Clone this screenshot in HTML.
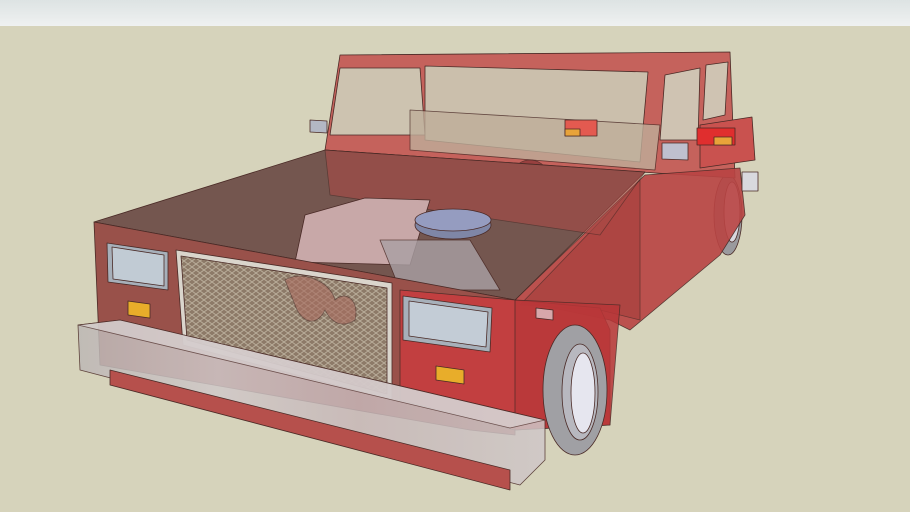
<!DOCTYPE html>
<html><head><meta charset="utf-8"><style>
html,body{margin:0;padding:0;width:910px;height:512px;overflow:hidden;background:#d6d3bb}
svg{display:block}
</style></head><body>
<svg width="910" height="512" viewBox="0 0 910 512" xmlns="http://www.w3.org/2000/svg">
<defs>
<linearGradient id="sky" x1="0" y1="0" x2="0" y2="1"><stop offset="0" stop-color="#dde3e3"/><stop offset="1" stop-color="#eff1f1"/></linearGradient>
<pattern id="mesh" width="8" height="6" patternUnits="userSpaceOnUse">
<rect width="8" height="6" fill="#8d7a68"/>
<path d="M0 3 L4 0 L8 3 L4 6 Z" fill="none" stroke="#b9ad9a" stroke-width="1"/>
</pattern>
<linearGradient id="bump" x1="0" y1="0" x2="1" y2="0"><stop offset="0" stop-color="#bdb7b5"/><stop offset=".3" stop-color="#d0c9c9"/><stop offset=".6" stop-color="#c7b7b8"/><stop offset="1" stop-color="#cfc8c8"/></linearGradient>
</defs>
<rect x="0" y="0" width="910" height="26" fill="url(#sky)"/>
<rect x="0" y="26" width="910" height="486" fill="#d6d3bb"/>
<g stroke="#4a2a26" stroke-width="0.8" stroke-linejoin="round">
<!-- rear wheel -->
<ellipse cx="728" cy="215" rx="14" ry="40" fill="#9a9a9e"/>
<ellipse cx="732" cy="212" rx="8" ry="30" fill="#d8d8e0"/>
<!-- cab -->
<polygon points="340,55 730,52 735,178 640,172 325,150" fill="#c5625c"/>
<polygon points="340,68 420,68 425,135 330,135" fill="#cdc3b0"/>
<polygon points="425,66 648,72 640,162 425,140" fill="#cbbfac"/>
<polygon points="665,75 700,68 698,140 660,140" fill="#cfc3b2"/>
<polygon points="706,65 728,62 725,115 703,120" fill="#cfc3b2"/>
<polygon points="410,110 660,125 655,170 410,150" fill="#bfae9a" opacity=".8"/>
<rect x="565" y="120" width="32" height="16" fill="#e35a50"/>
<rect x="565" y="129" width="15" height="7" fill="#e8a33a"/>
<polygon points="700,125 752,117 755,160 700,168" fill="#c9524f"/>
<rect x="697" y="128" width="38" height="17" fill="#e02e2e"/>
<rect x="714" y="137" width="18" height="8" fill="#e8a33a"/>
<!-- side body -->
<polygon points="515,300 645,175 740,168 745,215 720,255 630,330 610,320" fill="#b94443" opacity=".9"/>
<polygon points="520,305 640,180 640,320 600,310" fill="#a8403e" opacity=".7"/>
<ellipse cx="530" cy="195" rx="25" ry="35" fill="#8e3838" opacity=".8"/>
<!-- hood -->
<polygon points="94,222 325,150 645,172 515,300" fill="#74564f"/>
<polygon points="325,150 645,172 600,235 330,195" fill="#a94a46" opacity=".6"/>
<!-- engine -->
<polygon points="305,215 365,198 430,200 410,265 295,262" fill="#c8a8a8"/>
<ellipse cx="453" cy="225" rx="38" ry="14" fill="#7f86a6"/>
<ellipse cx="453" cy="220" rx="38" ry="11" fill="#959cc0"/>
<polygon points="380,240 470,240 500,290 400,290" fill="#a9a0a4" opacity=".8"/>
<!-- front face -->
<polygon points="94,222 515,300 515,435 470,430 100,365" fill="#99514a"/>
<polygon points="400,290 515,300 600,308 610,330 610,425 515,430 400,400" fill="#c73e3f" opacity=".9"/>
<polygon points="515,300 620,305 610,425 515,430" fill="#b83638" opacity=".85"/>
<!-- front wheel -->
<ellipse cx="575" cy="390" rx="32" ry="65" fill="#a0a0a4"/>
<ellipse cx="580" cy="392" rx="18" ry="48" fill="#b8b8bf"/>
<ellipse cx="583" cy="393" rx="12" ry="40" fill="#e6e6ef"/>
<!-- headlights -->
<polygon points="107,243 168,252 168,290 108,282" fill="#a7b0ba"/>
<polygon points="112,247 164,255 164,286 113,279" fill="#c1cbd4"/>
<polygon points="403,296 492,308 490,352 403,340" fill="#a7b0ba"/>
<polygon points="409,301 488,312 486,347 409,336" fill="#c3ccd6"/>
<rect x="128" y="302" width="22" height="14" fill="#e8ad2a" transform="skewY(8) translate(0,-19)"/>
<polygon points="436,366 464,370 464,384 436,380" fill="#e8ad2a"/>
<polygon points="536,308 553,310 553,320 536,318" fill="#d7a7aa"/>
<!-- grille -->
<polygon points="176,250 392,283 392,400 183,345" fill="#dad5cc"/>
<polygon points="181,256 387,288 387,394 187,340" fill="url(#mesh)"/>
<path d="M285 280 C300 270 330 280 335 300 C345 290 360 300 355 320 C340 330 330 320 325 310 C315 330 300 320 295 305 Z" fill="#a86a5e" opacity=".6"/>
<!-- bumper -->
<polygon points="78,325 120,320 545,420 545,460 520,485 80,370" fill="url(#bump)" opacity=".85"/>
<polygon points="78,325 120,320 545,420 510,428" fill="#d8d0d0" opacity=".7"/>
<polygon points="110,370 510,470 510,490 110,385" fill="#b6504c"/>
<!-- mirrors -->
<polygon points="310,120 327,121 327,133 310,132" fill="#b3b7c4"/>
<polygon points="662,143 688,143 688,160 662,159" fill="#bfc0cf"/>
<polygon points="742,172 758,172 758,191 742,191" fill="#d9d9de"/>
</g>
</svg>
</body></html>
